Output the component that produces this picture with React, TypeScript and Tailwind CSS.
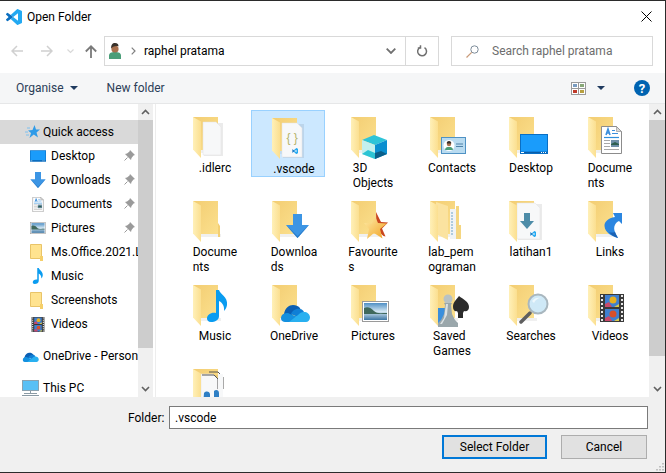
import type { ReactNode, SVGProps } from "react";

type G = SVGProps<SVGSVGElement>;

function VsCodeLogo(p: G) {
  return (
    <svg viewBox="0 0 24 24" {...p}>
      <path fill="#23a9f2" d="M23.15 2.587 18.21.21a1.494 1.494 0 0 0-1.705.29l-9.46 8.63 3.781 2.87 7.178-5.448v10.896L10.826 12l-3.78 2.87 9.46 8.63a1.492 1.492 0 0 0 1.704.29l4.942-2.377A1.5 1.5 0 0 0 24 20.06V3.939a1.5 1.5 0 0 0-.85-1.352z" />
      <path fill="#0b6fc0" d="M7.045 9.13 2.925 6a.999.999 0 0 0-1.276.057L.327 7.261A1 1 0 0 0 .326 8.74L3.899 12 .326 15.26a1 1 0 0 0 .001 1.479L1.65 17.94a.999.999 0 0 0 1.276.057l4.12-3.128L10.826 12z" />
    </svg>
  );
}

function UserGlyph(p: G) {
  return (
    <svg viewBox="0 0 12 16" {...p}>
      <path fill="#4a9e78" d="M0 16v-3.5C0 10 2.5 9 6 9s6 1 6 3.5V16z" />
      <circle cx="6" cy="6" r="3.6" fill="#a9714e" />
      <path fill="#39312b" d="M2.2 5.5C1.8 2 3.5 0 6 0s3.8 1.5 3.4 3.4C7.5 2.6 4.5 3 2.2 5.5z" />
    </svg>
  );
}

function Monitor(p: G) {
  return (
    <svg viewBox="0 0 28 20" {...p}>
      <rect width="28" height="20" fill="#0a6fc4" />
      <rect x="1" y="1" width="26" height="16.5" fill="#1a9cfb" />
      <rect x="1" y="18" width="26" height="1" fill="#0a5da8" />
      <path stroke="#fff" strokeWidth="1" strokeDasharray="1 1" d="M21 18.5h6" />
      <path stroke="#fff" d="M1 18.5h3" />
    </svg>
  );
}

function DownArrow(p: G) {
  return (
    <svg viewBox="0 0 23 24" {...p}>
      <path fill="#3c95e4" d="M7 0h9v11h7L11.5 24 0 11h7z" />
      <path fill="#2a7cc9" d="M0 11l11.5 13L23 11l-11.5 11z" />
    </svg>
  );
}

function DocGlyph(p: G) {
  return (
    <svg viewBox="0 0 21 28" {...p}>
      <path fill="#fff" stroke="#8c8c8c" d="M.5.5h15l5 5v22H.5z" />
      <path fill="#d9d9d9" stroke="#8c8c8c" strokeWidth=".6" d="M15.5.5v5h5z" />
      <path stroke="#3c8fdc" strokeWidth="1.6" fill="none" d="M5 9l2-6 2 6M5.6 7h3" />
      <path stroke="#3c8fdc" d="M11 4.5h3M11 7.5h6" />
      <path stroke="#2f8fdc" strokeWidth="1.2" d="M3 11.5h15" />
      <path stroke="#a8a8a8" d="M3 14.5h6M3 17.5h6M3 20.5h6M3 23.5h15" />
      <rect x="10" y="14" width="8" height="7" fill="#6f8fa8" />
      <path fill="#2e5f4f" d="M10 18l4-2 4 2v1h-8z" />
    </svg>
  );
}

function PictureGlyph(p: G) {
  return (
    <svg viewBox="0 0 27 21" {...p}>
      <defs>
        <linearGradient id="pic-sky" x1="0" y1="0" x2="0" y2="1">
          <stop offset="0" stopColor="#4f8fc4" />
          <stop offset="0.5" stopColor="#d3e6f2" />
          <stop offset="1" stopColor="#3c75a2" />
        </linearGradient>
      </defs>
      <rect x=".5" y=".5" width="26" height="20" fill="#fff" stroke="#9a9a9a" />
      <rect x="2" y="2" width="23" height="17" fill="url(#pic-sky)" />
      <path fill="#40695c" d="M2 7c4-2 7 0 10 3s7 2 13 2v1H2z" />
    </svg>
  );
}

function NoteGlyph(p: G) {
  return (
    <svg viewBox="0 0 21 32" {...p}>
      <path fill="#0a9cf0" d="M9 0h3c1 4 9 7 8 15-.3 3-2 5-3 6 .6-4-1-8-5-10v15c0 4-4 6-8 6-3 0-4-2-4-3.500C0 25 4 22 9 23z" />
    </svg>
  );
}

function FilmGlyph(p: G) {
  return (
    <svg viewBox="0 0 24 28" {...p}>
      <rect width="24" height="28" fill="#3a3a3a" />
      <path stroke="#e8e8e8" strokeWidth="2" strokeDasharray="2 2" d="M2 1v26M22 1v26" />
      <rect x="5" y="1" width="14" height="12" fill="#3f7fd0" />
      <rect x="5" y="15" width="14" height="12" fill="#3f7fd0" />
      <circle cx="13" cy="6" r="3.500" fill="#e8b020" />
      <circle cx="13" cy="20" r="3.500" fill="#d8502a" />
      <path fill="#c9486a" d="M5 10l4-2 3 5H5zM5 24l4-2 3 5H5z" />
      <path fill="#d8c94a" d="M14 13l5-3v3zM14 27l5-3v3z" />
    </svg>
  );
}

function CloudGlyph(p: G) {
  return (
    <svg viewBox="0 0 30 20" {...p}>
      <path fill="#0a5fb4" d="M4 12C5 6 9 3 13 3c3 0 6 1 7.500 4L10 14 2 15z" />
      <path fill="#0f7fd6" d="M11 12c1-3 5-6 9-5 2 .4 3 1 4 3l-6 5z" />
      <path fill="#1490df" d="M2 13c2-2 6-3 8-1l8 3 5 5H5c-4 0-5-4-3-7z" />
      <path fill="#29b0f0" d="M24 10c3 0 6 2 6 5.500 0 2.500-2 4.500-4 4.500H9l9-7c2-2 3-3 6-3z" />
    </svg>
  );
}

function StarGlyph(p: G) {
  return (
    <svg viewBox="0 0 24 28" {...p}>
      <defs>
        <linearGradient id="star-fill" x1="0" y1="0" x2="1" y2="1">
          <stop offset="0" stopColor="#fff0b0" />
          <stop offset="1" stopColor="#f0a020" />
        </linearGradient>
      </defs>
      <path fill="#c9461e" d="M12 0l5 10 7 .5-6 6 3.500 8-2-.5-7-6z" />
      <path fill="url(#star-fill)" d="M10.500 3l3.500 8 9 .5-7 5.500 2.500 9.500L10 21l-7 6 2-10-5-6 8 .5z" />
    </svg>
  );
}

function CubeGlyph(p: G) {
  return (
    <svg viewBox="0 0 25 24" {...p}>
      <path fill="#2ec4d8" d="M12 0l13 5-12 5L0 5z" />
      <path fill="#c4f0ee" d="M0 5l13 5v14L0 19z" />
      <path fill="#0a8fd0" d="M13 10l12-5v14l-12 5z" />
      <path fill="#0b5f8a" d="M13 24l12-5-6-3-6 2z" />
      <path fill="#2cc4d4" d="M0 19l13 5v-6L6 15z" />
    </svg>
  );
}

function CardGlyph(p: G) {
  return (
    <svg viewBox="0 0 25 17" {...p}>
      <rect x=".5" y=".5" width="24" height="16" fill="#b9dbf0" stroke="#4f92c4" />
      <circle cx="8" cy="8.500" r="5.500" fill="#fff" />
      <path fill="#4a9e78" d="M4 13c0-2.500 2-3 4-3s4 .5 4 3z" />
      <circle cx="8" cy="7" r="2.200" fill="#a9714e" />
      <path fill="#39312b" d="M5.800 6.500C5.500 5 6.500 4 8 4s2.500 1 2.200 2.500z" />
      <path stroke="#4f82a8" d="M15 7h7M15 9.500h7" />
    </svg>
  );
}

function ShortcutGlyph(p: G) {
  return (
    <svg viewBox="0 0 18 25" {...p}>
      <path fill="#2b86e0" d="M9 0h9v11l-3-3c-4 2-6 6-4 11 .6 2 2 4 3 6C8 23 1 20 .5 13 .2 9 4 5 11 4z" />
      <path fill="#1a62b4" d="M11 19c.6 2 2 4 3 6-4-1-7-3-9-6 2 .8 4 .8 6 0z" />
    </svg>
  );
}

function MagnifierGlyph(p: G) {
  return (
    <svg viewBox="0 0 30 31" {...p}>
      <path stroke="#5f5f5f" strokeWidth="3.500" strokeLinecap="round" d="M2 29l9-9" />
      <circle cx="19" cy="11" r="9.500" fill="#cfe9f7" stroke="#a9b7bf" strokeWidth="2" />
      <path fill="#eef8fd" d="M13 8c2-3 6-4 9-3-3 0-6 2-7 5z" />
    </svg>
  );
}

function GamesGlyph(p: G) {
  return (
    <svg viewBox="0 0 34 34" {...p}>
      <path fill="#3a8fdc" d="M0 14h15v8H9v7H0z" />
      <path fill="#2b2b2b" d="M23 2c-3 4-6 6-6 11 0 3 2 5 4 4l1 2v5h5v-5l1-2c3 1 5-1 5-4 0-5-6-8-10-11z" />
      <circle cx="12" cy="5" r="4.500" fill="#b8c2c4" />
      <path fill="#9aa7ab" d="M8 9h8l-1 2 1 9 3 6 3 3v4H2v-4l3-3 3-6 1-9z" />
      <path fill="#dbe1e3" d="M10 10h2l-1 11-5 9H4l4-6z" />
    </svg>
  );
}

function PaperSheet({ children, x, y, w, h }: { children?: ReactNode; x: number; y: number; w: number; h: number }) {
  return (
    <g>
      <path fill="#000" opacity=".08" d={`M${x + 1} ${y + 1}h${w + 1}v${h}h-${w + 1}z`} />
      <path fill="#f7f8f9" stroke="#e3e3e3" strokeWidth=".5" d={`M${x} ${y}h${w - 5}l5 5v${h - 5}h-${w}z`} />
      {children}
    </g>
  );
}

function MiniVs({ x, y }: { x: number; y: number }) {
  return <VsCodeLogo x={x} y={y} width="6" height="6" />;
}

// every overlay is placed relative to the folder's top left corner
const overlays: Record<string, ReactNode> = {
  idlerc: <PaperSheet x={10} y={5} w={18} h={33} />,
  vscode: (
    <PaperSheet x={10} y={5} w={20} h={34}>
      <text x="14.500" y="24" fontSize="12" fill="#b5b46a" fontFamily="Liberation Sans, sans-serif">{"{ }"}</text>
      <MiniVs x={20} y={30} />
    </PaperSheet>
  ),
  cube: <CubeGlyph x={11} y={18} width={25} height={24} />,
  card: <CardGlyph x={11} y={20} width={25} height={17} />,
  monitor: <Monitor x={11} y={17} width={28} height={20} />,
  doc: <DocGlyph x={13} y={9} width={21} height={28} />,
  plain: <path fill="#f3cf74" d="M25 22l2 3v11H25z" />,
  down: <DownArrow x={14} y={13} width={23} height={24} />,
  star: <StarGlyph x={13} y={11} width={24} height={28} />,
  lab: (
    <g>
      <path fill="#fbe3a0" d="M6 1l12 4v34L6 33z" />
      <rect x="20" y="8" width="6" height="30" fill="#f0f3f5" />
      <path stroke="#6fa3c8" strokeDasharray="2 1" d="M22 11v24" />
      <rect x="26" y="5" width="3" height="33" fill="#f5d680" />
      <rect x="29" y="24" width="2" height="14" fill="#f5d680" />
    </g>
  ),
  latihan: (
    <PaperSheet x={8} y={2} w={23} h={36}>
      <path fill="#4d8ca8" d="M15 12h6v8h4l-7 8-7-8h4z" />
      <MiniVs x={21} y={30} />
    </PaperSheet>
  ),
  link: <ShortcutGlyph x={16} y={12} width={18} height={25} />,
  note: <NoteGlyph x={14} y={5} width={21} height={32} />,
  cloud: <CloudGlyph x={8} y={17} width={30} height={20} />,
  picture: <PictureGlyph x={11} y={16} width={27} height={21} />,
  games: <GamesGlyph x={6} y={9} width={34} height={34} />,
  search: <MagnifierGlyph x={10} y={8} width={30} height={31} />,
  film: <FilmGlyph x={12} y={9} width={24} height={28} />,
  user: (
    <g>
      <PaperSheet x={8} y={5} w={17} h={30} />
      <path stroke="#555" fill="none" d="M9 6h12l4 4v10M16 3h9l5 5v12" />
      <rect x="25" y="5" width="5" height="28" fill="#f7f8f9" />
      <path fill="#2f7fc4" d="M11 24c2-2 5-2 6 1v12h-7zM21 22c2-2 5-1 5 2v12h-5z" />
      <path fill="#f5c93c" d="M26 34h4v6h-4z" />
    </g>
  ),
};

function Folder({ kind }: { kind: string }) {
  return (
    <svg width="60" height="44" viewBox="0 0 60 44" className="ml-[21px] block overflow-visible">
      <path fill="url(#folder-back)" d="M0 0h25v33H8z" />
      <path fill="#000" opacity=".06" d="M8 33h20v3H8z" />
      {overlays[kind]}
      <path fill="url(#folder-flap)" d="M0 0l8 4.500V41l-8-8.500z" />
    </svg>
  );
}

const folders: { name: string[]; kind: string; selected?: boolean }[] = [
  { name: [".idlerc"], kind: "idlerc" },
  { name: [".vscode"], kind: "vscode", selected: true },
  { name: ["3D", "Objects"], kind: "cube" },
  { name: ["Contacts"], kind: "card" },
  { name: ["Desktop"], kind: "monitor" },
  { name: ["Docume", "nts"], kind: "doc" },
  { name: ["Docume", "nts"], kind: "plain" },
  { name: ["Downloa", "ds"], kind: "down" },
  { name: ["Favourite", "s"], kind: "star" },
  { name: ["lab_pem", "ograman"], kind: "lab" },
  { name: ["latihan1"], kind: "latihan" },
  { name: ["Links"], kind: "link" },
  { name: ["Music"], kind: "note" },
  { name: ["OneDrive"], kind: "cloud" },
  { name: ["Pictures"], kind: "picture" },
  { name: ["Saved", "Games"], kind: "games" },
  { name: ["Searches"], kind: "search" },
  { name: ["Videos"], kind: "film" },
  { name: [""], kind: "user" },
];

function Pin() {
  return (
    <svg width="11" height="11" viewBox="0 0 11 11" className="absolute left-[124px] top-[6px]">
      <path fill="#9a9a9a" d="M6 0l5 5-1.500.5L7.500 8 7 10 1 4l2-.5L5.500 1.500z" />
      <path stroke="#9a9a9a" d="M3.500 7.500L.5 10.500" />
    </svg>
  );
}

function QuickStar() {
  return (
    <svg width="15" height="14" viewBox="0 0 15 14" className="shrink-0">
      <path fill="#2f9be8" d="M9.500 0l1.500 4.500h4L11.500 7.500 13 12.500 8.800 9.500 4.500 13l1.500-5L3 5.500l4.500-.5z" />
      <path stroke="#7cc0f0" d="M0 7h3M1 10h3M2 3h3" />
    </svg>
  );
}

function SmallFolder() {
  return (
    <svg width="13" height="17" viewBox="0 0 13 17">
      <path fill="#ffe38f" stroke="#e9c468" d="M.5.5h11v14h-11z" />
      <path fill="#f5cf6a" d="M10 12h3v5h-3z" />
    </svg>
  );
}

function ThisPc() {
  return (
    <svg width="17" height="16" viewBox="0 0 17 16" className="shrink-0">
      <rect x=".5" y=".5" width="16" height="10" fill="#59c0f5" stroke="#8aa2b0" />
      <path stroke="#8a9aa4" d="M8.500 11v2M2 13.500h13M0 15.500h17" />
    </svg>
  );
}

const sidebar: { label: string; icon: ReactNode; pin?: boolean }[] = [
  { label: "Desktop", icon: <Monitor width={16} height={12} />, pin: true },
  { label: "Downloads", icon: <DownArrow width={16} height={16} />, pin: true },
  { label: "Documents", icon: <DocGlyph width={12} height={15} className="ml-[2px]" />, pin: true },
  { label: "Pictures", icon: <PictureGlyph width={16} height={12} />, pin: true },
  { label: "Ms.Office.2021.L", icon: <SmallFolder /> },
  { label: "Music", icon: <NoteGlyph width={12} height={16} className="ml-[2px]" /> },
  { label: "Screenshots", icon: <SmallFolder /> },
  { label: "Videos", icon: <FilmGlyph width={14} height={15} className="ml-[1px]" /> },
];

function ScrollBar({ thumbHeight, className }: { thumbHeight: string; className: string }) {
  return (
    <div className={`flex shrink-0 flex-col bg-[#f0f0f0] ${className}`}>
      <div className="flex h-[16px] items-center justify-center">
        <svg width="9" height="6" viewBox="0 0 9 6"><path fill="none" stroke="#606060" strokeWidth="1.600" d="M1 5l3.500-3.500L8 5" /></svg>
      </div>
      <div className={`bg-[#cdcdcd] ${thumbHeight}`} />
      <div className="flex-1" />
      <div className="flex h-[16px] items-center justify-center">
        <svg width="9" height="6" viewBox="0 0 9 6"><path fill="none" stroke="#606060" strokeWidth="1.600" d="M1 1l3.500 3.500L8 1" /></svg>
      </div>
    </div>
  );
}

export default function App() {
  return (
    <div className="flex h-[473px] w-[666px] flex-col overflow-hidden border-t border-r border-b border-[#2b2b2b] bg-white font-['Roboto',sans-serif] text-[12px] text-black">
      <svg className="absolute h-0 w-0">
        <defs>
          <linearGradient id="folder-back" x1="0" y1="0" x2="1" y2="1">
            <stop offset="0" stopColor="#f3cd72" />
            <stop offset="1" stopColor="#fbe08e" />
          </linearGradient>
          <linearGradient id="folder-flap" x1="0" y1="0" x2="1" y2="0">
            <stop offset="0" stopColor="#fff0b8" />
            <stop offset="1" stopColor="#fbdf90" />
          </linearGradient>
        </defs>
      </svg>

      {/* title bar */}
      <div className="flex h-[31px] shrink-0 items-center pl-[6px] pr-[13px]">
        <VsCodeLogo width="16" height="16" />
        <span className="ml-[5px]">Open Folder</span>
        <svg width="11" height="11" viewBox="0 0 11 11" className="ml-auto">
          <path stroke="#000" strokeWidth="1" d="M.5.5l10 10M10.500.5l-10 10" />
        </svg>
      </div>

      {/* nav row */}
      <div className="flex h-[41px] shrink-0 items-start pt-[4px]">
        <div className="flex h-[30px] w-[104px] items-center pl-[11px]">
          <svg width="12" height="12" viewBox="0 0 12 12"><path fill="none" stroke="#d0d0d0" strokeWidth="1.500" d="M12 6H1.500M6 1L1 6l5 5" /></svg>
          <svg width="12" height="12" viewBox="0 0 12 12" className="ml-[18px]"><path fill="none" stroke="#d0d0d0" strokeWidth="1.500" d="M0 6h10.500M6 1l5 5-5 5" /></svg>
          <svg width="7" height="5" viewBox="0 0 7 5" className="ml-[14px]"><path fill="none" stroke="#d8d8d8" strokeWidth="1.200" d="M.5.5l3 3 3-3" /></svg>
          <svg width="12" height="13" viewBox="0 0 12 13" className="ml-[11px]"><path fill="none" stroke="#7a7a7a" strokeWidth="1.800" d="M6 13V1.500M.8 6.500L6 1.300l5.200 5.200" /></svg>
        </div>
        <div className="flex h-[30px] w-[335px] items-center border border-[#d9d9d9]">
          <UserGlyph width="12" height="16" className="ml-[4px]" />
          <svg width="5" height="8" viewBox="0 0 5 8" className="ml-[10px]"><path fill="none" stroke="#808080" strokeWidth="1.200" d="M.7.7L4 4 .7 7.300" /></svg>
          <span className="ml-[8px] leading-none">raphel pratama</span>
          <svg width="10" height="6" viewBox="0 0 10 6" className="ml-auto mr-[9px]"><path fill="none" stroke="#707070" strokeWidth="1.800" d="M.7.7L5 5 9.300.7" /></svg>
          <div className="flex h-full w-[33px] items-center justify-center border-l border-[#d9d9d9]">
            <svg width="11" height="12" viewBox="0 0 11 12"><path fill="none" stroke="#707070" strokeWidth="1.500" d="M7.500 2.700A4.400 4.400 0 1 1 3 2.500M3.500.3v2.700H.8" /></svg>
          </div>
        </div>
        <div className="ml-[12px] flex h-[30px] w-[202px] items-center border border-[#d9d9d9] pl-[14px]">
          <svg width="13" height="13" viewBox="0 0 13 13"><circle cx="8.500" cy="4.500" r="3.700" fill="none" stroke="#7d8c9a" /><path stroke="#c99a78" strokeWidth="1.200" d="M5.700 7.300L.5 12.500" /></svg>
          <span className="ml-[13px] text-[#6d6d6d]">Search raphel pratama</span>
        </div>
      </div>

      {/* toolbar */}
      <div className="flex h-[31px] shrink-0 items-center border-b border-[#e6e7e8] bg-[#f5f6f7] text-[#2c3e57]">
        <span className="ml-[16px]">Organise</span>
        <svg width="8" height="4" viewBox="0 0 8 4" className="ml-[6px]"><path fill="#1f3a5f" d="M0 0h8L4 4z" /></svg>
        <span className="ml-[29px]">New folder</span>
        <div className="ml-auto mr-[15px] flex items-center">
          <svg width="15" height="13" viewBox="0 0 15 13" className="mr-[11px]">
            <rect x=".5" y=".5" width="14" height="12" fill="#fff" stroke="#9a9a9a" />
            <path stroke="#9a9a9a" d="M7.500 0v13M0 6.500h15" />
            <rect x="2" y="2" width="4" height="3" fill="#7a9cc0" />
            <rect x="9" y="2" width="4" height="3" fill="#88a878" />
            <rect x="2" y="8" width="4" height="3" fill="#c03a2a" />
            <rect x="9" y="8" width="4" height="3" fill="#b8a040" />
          </svg>
          <svg width="8" height="4" viewBox="0 0 8 4" className="mr-[29px]"><path fill="#1f3a5f" d="M0 0h8L4 4z" /></svg>
          <div className="flex h-[16px] w-[16px] items-center justify-center rounded-full bg-[#0063b1] text-[13px] font-bold leading-none text-white">?</div>
        </div>
      </div>

      {/* body */}
      <div className="flex min-h-0 flex-1">
        <div className="w-[138px] shrink-0 overflow-hidden pt-[16px] whitespace-nowrap">
          <div className="flex h-[24px] items-center bg-[#d9d9d9] pl-[25px]">
            <QuickStar />
            <span className="ml-[3px]">Quick access</span>
          </div>
          {sidebar.map((s) => (
            <div key={s.label} className="relative flex h-[24px] items-center pl-[30px]">
              <div className="flex w-[21px] shrink-0 items-center">{s.icon}</div>
              <span>{s.label}</span>
              {s.pin && <Pin />}
            </div>
          ))}
          <div className="mt-[8px] flex h-[24px] items-center pl-[22px]">
            <CloudGlyph width={17} height={11} className="shrink-0" />
            <span className="ml-[4px]">OneDrive - Person</span>
          </div>
          <div className="mt-[8px] flex h-[24px] items-center pl-[22px]">
            <ThisPc />
            <span className="ml-[4px]">This PC</span>
          </div>
        </div>
        <ScrollBar className="w-[15px]" thumbHeight="h-[228px]" />
        <div className="w-[3px] shrink-0 border-r border-[#ededed]" />

        <div className="min-w-0 flex-1 overflow-hidden pl-[16px] pt-[6px]">
          <div className="grid grid-cols-[repeat(6,74px)] auto-rows-[84px] gap-x-[5px]">
            {folders.map((f, i) => (
              <div key={i}>
                <div className={`h-[67px] w-[74px] pt-[7px] ${f.selected ? "border border-[#99d1ff] bg-[#cce8ff] pt-[6px]" : ""}`}>
                  <div className={f.selected ? "-ml-px" : ""}>
                    <Folder kind={f.kind} />
                    <div className="ml-[8px] flex w-[70px] justify-center leading-[15px]">
                      <div className="whitespace-nowrap text-left">
                        {f.name.map((line, n) => (
                          <div key={n}>{line}</div>
                        ))}
                      </div>
                    </div>
                  </div>
                </div>
              </div>
            ))}
          </div>
        </div>
        <ScrollBar className="w-[16px]" thumbHeight="h-[236px]" />
      </div>

      {/* footer */}
      <div className="relative h-[75px] shrink-0 bg-[#f0f0f0]">
        <div className="flex items-center pt-[9px]">
          <span className="ml-[128px] w-[41px]">Folder:</span>
          <div className="flex h-[23px] w-[479px] items-center border border-[#7a7a7a] bg-white pl-[5px]">.vscode</div>
        </div>
        <div className="mt-[6px] flex justify-start pl-[442px]">
          <button type="button" className="h-[24px] w-[105px] border-2 border-[#0078d7] bg-[#e1e1e1]">Select Folder</button>
          <button type="button" className="ml-[14px] h-[24px] w-[86px] border border-[#adadad] bg-[#e1e1e1]">Cancel</button>
        </div>
        <svg width="9" height="9" viewBox="0 0 9 9" className="absolute bottom-[1px] right-[1px]">
          <path stroke="#b0b0b0" strokeWidth="1.500" strokeDasharray="1.500 1.500" d="M8 1v8M5 4v5M2 7v2" />
        </svg>
      </div>
    </div>
  );
}
